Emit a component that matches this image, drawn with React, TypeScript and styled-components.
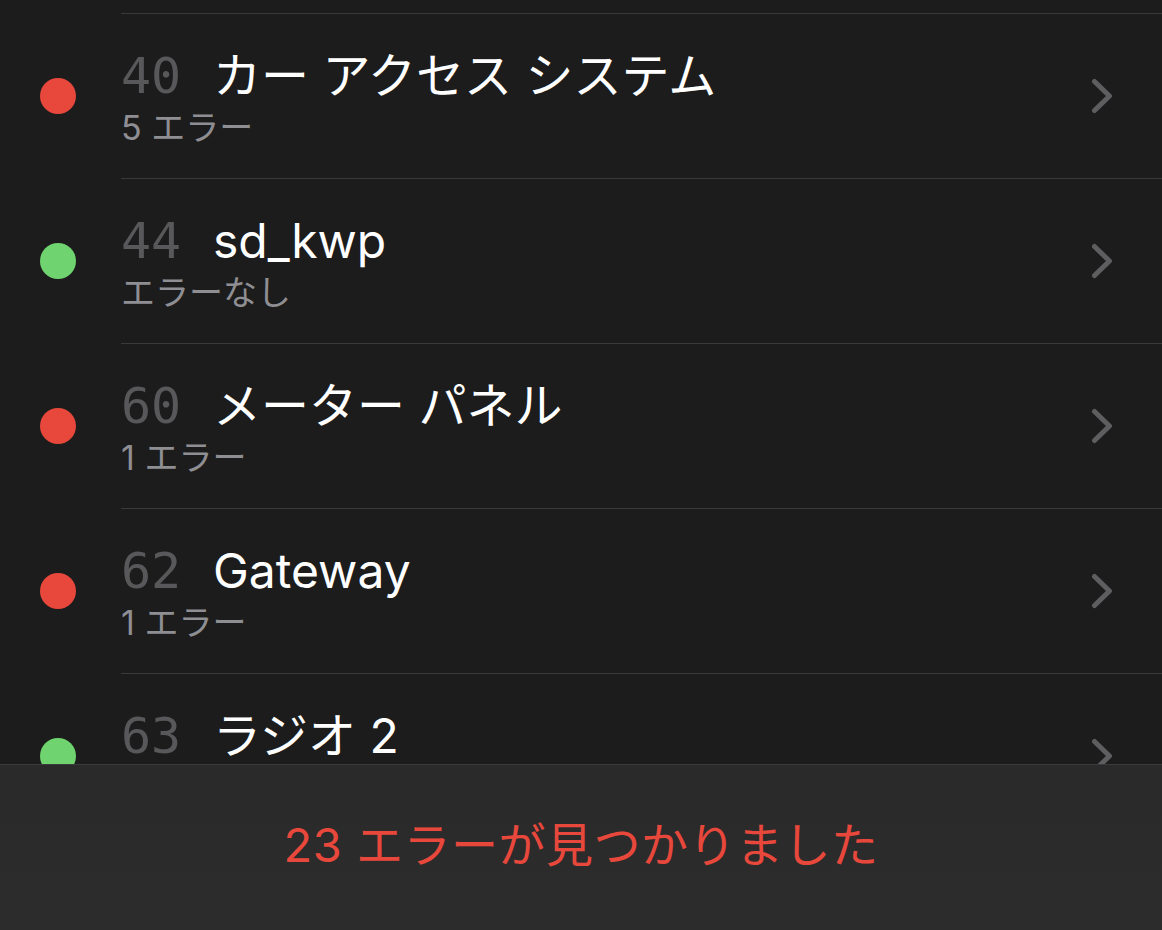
import styled, { createGlobalStyle } from "styled-components";

const GlobalStyle = createGlobalStyle`
  html, body {
    margin: 0;
    padding: 0;
    background: #1c1c1c;
    overflow: hidden;
  }
  * { box-sizing: border-box; }
`;

const Page = styled.div`
  width: 1162px;
  height: 930px;
  display: flex;
  flex-direction: column;
  background: #1c1c1c;
  font-family: Inter, "Noto Sans CJK JP", sans-serif;
`;

const List = styled.div`
  flex: 1;
  overflow: hidden;
  padding-top: 13px;
`;

const Row = styled.div`
  height: 165px;
  display: flex;
  flex-shrink: 0;
`;

const DotCell = styled.div`
  width: 121px;
  display: flex;
  align-items: center;
  padding-left: 40px;
`;

const Dot = styled.div<{ ok: boolean }>`
  width: 36px;
  height: 36px;
  border-radius: 50%;
  background: ${({ ok }) => (ok ? "#6fd46f" : "#e8483c")};
`;

const Content = styled.div`
  flex: 1;
  display: flex;
  align-items: center;
  border-top: 1px solid #3a3a3c;
  padding-right: 48px;
`;

const TextBlock = styled.div`
  flex: 1;
  display: flex;
  flex-direction: column;
  margin-top: 6px;
`;

const TitleLine = styled.div`
  display: flex;
  align-items: baseline;
  height: 54px;
`;

const Code = styled.span`
  width: 92px;
  font-family: "DejaVu Sans Mono", monospace;
  font-size: 50px;
  line-height: 54px;
  color: #58585a;
`;

const Title = styled.span`
  font-size: 48px;
  line-height: 54px;
  color: #ffffff;
`;

const Sub = styled.div`
  font-size: 34px;
  line-height: 42px;
  color: #8e8e93;
  margin-top: 4px;
`;

const Chevron = styled.svg`
  width: 24px;
  height: 36px;
  flex-shrink: 0;
`;

const Bar = styled.div`
  height: 166px;
  flex-shrink: 0;
  border-top: 1px solid #3b3b3d;
  background: linear-gradient(180deg, #2a2a2a 0%, #2c2c2c 100%);
  display: flex;
  align-items: center;
  justify-content: center;
  padding-bottom: 12px;
`;

const BarText = styled.div`
  font-size: 47px;
  color: #e8483c;
  letter-spacing: 0.5px;
`;

const items = [
  { code: "40", name: "カー アクセス システム", sub: "5 エラー", ok: false },
  { code: "44", name: "sd_kwp", sub: "エラーなし", ok: true },
  { code: "60", name: "メーター パネル", sub: "1 エラー", ok: false },
  { code: "62", name: "Gateway", sub: "1 エラー", ok: false },
  { code: "63", name: "ラジオ 2", sub: "エラーなし", ok: true },
];

function App() {
  return (
    <Page>
      <GlobalStyle />
      <List>
        {items.map((it) => (
          <Row key={it.code}>
            <DotCell>
              <Dot ok={it.ok} />
            </DotCell>
            <Content>
              <TextBlock>
                <TitleLine>
                  <Code>{it.code}</Code>
                  <Title>{it.name}</Title>
                </TitleLine>
                <Sub>{it.sub}</Sub>
              </TextBlock>
              <Chevron viewBox="0 0 24 36">
                <path
                  d="M4.5 3.5 L19.5 18 L4.5 32.5"
                  fill="none"
                  stroke="#5e5e60"
                  strokeWidth="5"
                  strokeLinecap="round"
                  strokeLinejoin="round"
                />
              </Chevron>
            </Content>
          </Row>
        ))}
      </List>
      <Bar>
        <BarText>23 エラーが見つかりました</BarText>
      </Bar>
    </Page>
  );
}

export default App;
